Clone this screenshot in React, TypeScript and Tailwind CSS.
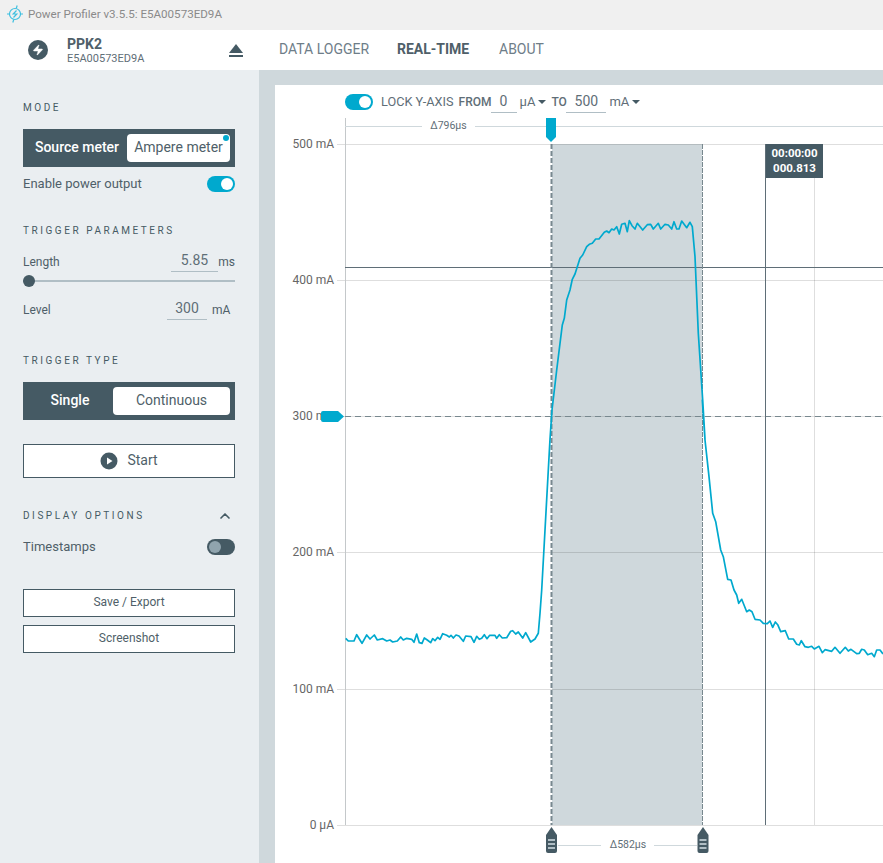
import { Zap, ChevronUp } from "lucide-react";

const CYAN = "#00a9ce";
const SLATE = "#455a64";

// trace samples, read off the zoomed crops: [x, y] relative to crop, 3x
const flat = [
  [17, 145], [25, 153], [42, 153], [50, 134], [58, 147], [66, 160], [80, 135], [90, 147], [103, 135], [112, 150],
  [128, 146], [140, 153], [150, 150], [158, 156], [172, 153], [182, 141], [190, 150], [200, 145], [215, 148], [222, 157],
  [230, 132], [238, 158], [246, 160], [253, 144], [262, 150], [272, 158], [278, 146], [285, 152], [293, 142], [300, 148],
  [308, 131], [320, 136], [328, 141], [333, 136], [340, 144], [348, 135], [357, 138], [370, 154], [377, 138], [393, 140],
  [402, 157], [410, 139], [418, 148], [425, 145], [433, 134], [441, 146], [449, 136], [465, 136], [470, 145], [478, 134],
  [487, 144], [500, 143], [512, 124], [518, 122], [527, 132], [535, 126], [548, 144], [557, 128], [572, 156], [585, 147],
  [595, 130], [600, 70], [605, 0],
];
const pulse = [
  [60, 718], [66, 630], [80, 510], [90, 430], [97, 375], [103, 355], [110, 300], [120, 270], [127, 238], [135, 222],
  [150, 175], [158, 165], [170, 140], [178, 133], [187, 130], [197, 117], [207, 117], [223, 97], [230, 93], [237, 98],
  [245, 87], [252, 90], [260, 80], [268, 102], [275, 73], [285, 70], [292, 95], [298, 62], [306, 77], [315, 87],
  [322, 70], [338, 90], [352, 74], [362, 73], [370, 87], [385, 70], [392, 87], [405, 73], [415, 75], [425, 87],
  [432, 65], [440, 87], [447, 87], [455, 63], [470, 83], [480, 67], [487, 80], [495, 170], [505, 400], [518, 600],
  [525, 718],
];
const decay = [
  [37, 0], [45, 120], [57, 230], [68, 340], [77, 365], [92, 450], [100, 470], [113, 538], [123, 540], [132, 570],
  [140, 585], [146, 610], [155, 598], [170, 635], [178, 630], [186, 635], [195, 658], [210, 660], [220, 670], [232, 671],
  [240, 663], [248, 682], [256, 666], [263, 674], [272, 695], [286, 692], [296, 717], [310, 717], [320, 733], [328, 735],
  [334, 722], [345, 740], [355, 742], [365, 739], [373, 747], [387, 739], [397, 758], [405, 749], [425, 754], [435, 742],
  [450, 760], [466, 742], [475, 753], [483, 748], [500, 761], [508, 760], [515, 748], [523, 750], [533, 764], [545, 760],
  [553, 770], [560, 750], [570, 750], [579, 762],
];

const toPage = (pts: number[][], ox: number, oy: number) =>
  pts.map(([x, y]) => `${(ox + x / 3).toFixed(1)},${(oy + y / 3).toFixed(1)}`).join(" ");

const trace = [toPage(flat, 340, 590), toPage(pulse, 530, 200), toPage(decay, 690, 400)].join(" ");

function SectionTitle({ children }: { children: string }) {
  return <div className="text-[10px] leading-3 tracking-[2.55px] uppercase text-[#455a64]">{children}</div>;
}

function Toggle({ on }: { on: boolean }) {
  return (
    <div
      className={`flex h-4 w-7 items-center rounded-full px-[2px] ${
        on ? "justify-end bg-[#00a9ce]" : "justify-start bg-[#455a64]"
      }`}
    >
      <div className={`h-3 w-3 rounded-full ${on ? "bg-white" : "bg-[#90a4ae]"}`} />
    </div>
  );
}

function NumberField({ value, className }: { value: string; className: string }) {
  return (
    <div className={`h-[21px] border-b border-[#b0bec5] text-center text-sm leading-[19px] text-[#5f6e77] ${className}`}>
      {value}
    </div>
  );
}

function Caret() {
  return <span className="ml-[3px] inline-block h-0 w-0 border-x-[4px] border-t-[4px] border-x-transparent border-t-[#455a64] align-middle" />;
}

function Sidebar() {
  return (
    <aside className="flex w-[259px] shrink-0 flex-col bg-[#eaeef1] pl-[23px] pr-[24px] pt-[32px] text-xs text-[#4f5f69]">
      <SectionTitle>Mode</SectionTitle>
      <div className="mt-[15px] flex h-[38px] items-center bg-[#455a64] pr-[5px] text-sm">
        <div className="w-[104px] pb-[3px] pl-1 text-center font-medium text-white">Source meter</div>
        <div className="relative flex h-7 flex-1 items-center justify-center rounded-sm bg-white pb-[3px] text-[#4f5f69]">
          Ampere meter
          <span className="absolute right-[1px] top-[1px] h-[6px] w-[6px] rounded-full bg-[#00a9ce]" />
        </div>
      </div>
      <div className="mt-[9px] flex h-4 items-center justify-between text-[13px]">
        <span>Enable power output</span>
        <Toggle on />
      </div>

      <div className="mt-[33px]">
        <SectionTitle>Trigger parameters</SectionTitle>
      </div>
      <div className="mt-[14px] flex items-center justify-between">
        <span>Length</span>
        <div className="flex items-center">
          <NumberField value="5.85" className="w-[47px]" />
          <span className="w-[17px] text-right">ms</span>
        </div>
      </div>
      <div className="relative mt-[3px] h-3">
        <div className="absolute left-0 right-0 top-[5px] h-[2px] bg-[#b0bec5]" />
        <div className="absolute left-0 top-0 h-3 w-3 rounded-full bg-[#455a64]" />
      </div>
      <div className="mt-[12px] flex items-center justify-between pr-[5px]">
        <span>Level</span>
        <div className="flex items-center">
          <NumberField value="300" className="w-10" />
          <span className="ml-[5px] w-[18px]">mA</span>
        </div>
      </div>

      <div className="mt-[35px]">
        <SectionTitle>Trigger type</SectionTitle>
      </div>
      <div className="mt-[15px] flex h-[38px] items-center bg-[#455a64] pr-[5px] text-sm">
        <div className="w-[90px] pb-[3px] pl-1 text-center font-medium text-white">Single</div>
        <div className="flex h-7 flex-1 items-center justify-center rounded-sm bg-white pb-[3px] text-[#4f5f69]">Continuous</div>
      </div>
      <button className="mt-[24px] flex h-[34px] items-center justify-center gap-[9px] border border-[#455a64] bg-white text-sm text-[#4f5f69]">
        <svg width="18" height="18" viewBox="0 0 18 18">
          <circle cx="9" cy="9" r="8.5" fill={SLATE} />
          <path d="M7 5.5 L12.5 9 L7 12.5 Z" fill="#fff" />
        </svg>
        <span className="pb-[2px]">Start</span>
      </button>

      <div className="mt-[32px] flex h-3 items-center justify-between">
        <SectionTitle>Display options</SectionTitle>
        <ChevronUp size={16} strokeWidth={2.5} color={SLATE} className="mr-[2px]" />
      </div>
      <div className="mt-[17px] flex h-4 items-center justify-between text-[13px]">
        <span>Timestamps</span>
        <Toggle on={false} />
      </div>
      <button className="mt-[34px] h-[28px] border border-[#455a64] bg-white pb-[2px] text-xs text-[#4f5f69]">Save / Export</button>
      <button className="mt-2 h-[28px] border border-[#455a64] bg-white pb-[2px] text-xs text-[#4f5f69]">Screenshot</button>
    </aside>
  );
}

function Marker({ x }: { x: number }) {
  return (
    <g transform={`translate(${x} 827)`}>
      <path d="M0 0 L5.5 8 V24 Q5.5 26 3.5 26 H-3.5 Q-5.5 26 -5.5 24 V8 Z" fill={SLATE} />
      <rect x="-3.5" y="12" width="7" height="2" fill="#b0bec5" />
      <rect x="-3.5" y="16" width="7" height="2" fill="#b0bec5" />
      <rect x="-3.5" y="20" width="7" height="2" fill="#b0bec5" />
    </g>
  );
}

function Chart() {
  const ticks = [
    { y: 144, label: "500 mA" },
    { y: 280, label: "400 mA" },
    { y: 416, label: "300 mA" },
    { y: 552, label: "200 mA" },
    { y: 689, label: "100 mA" },
    { y: 825, label: "0 µA" },
  ];
  return (
    <svg
      viewBox="275 116 608 747"
      width="608"
      height="747"
      className="block"
      style={{ fontFamily: "Roboto, sans-serif" }}
    >
      <rect x="552" y="144" width="150" height="681" fill="#cfd8dc" />

      {ticks.map((t) => (
        <g key={t.y}>
          <line x1="337" x2="883" y1={t.y + 0.5} y2={t.y + 0.5} stroke="#000" strokeOpacity="0.13" />
          <text x="334" y={t.y + 4} textAnchor="end" fontSize="12" fill="#666">
            {t.label}
          </text>
        </g>
      ))}
      <line x1="814.5" x2="814.5" y1="144" y2="825" stroke="#000" strokeOpacity="0.13" />
      <line x1="345.5" x2="345.5" y1="118" y2="825" stroke="#c4c8ca" />

      <line x1="345" x2="422" y1="126.5" y2="126.5" stroke="#cfd8dc" />
      <line x1="475" x2="883" y1="126.5" y2="126.5" stroke="#cfd8dc" />
      <text x="448.5" y="129" textAnchor="middle" fontSize="10.5" fill="#5f6e77">
        Δ796µs
      </text>

      <line x1="345" x2="883" y1="267.5" y2="267.5" stroke="#5f6e77" />
      <line x1="345" x2="883" y1="416.5" y2="416.5" stroke="#78888f" strokeDasharray="6 4" />
      <line x1="765.5" x2="765.5" y1="144" y2="825" stroke="#5f6e77" />
      <line x1="551.5" x2="551.5" y1="144" y2="825" stroke="#78888f" strokeWidth="2" strokeDasharray="5 2" />
      <line x1="702.5" x2="702.5" y1="144" y2="825" stroke="#78888f" strokeDasharray="5 1" />

      <polyline points={trace} fill="none" stroke={CYAN} strokeWidth="1.7" strokeLinejoin="round" />

      <rect x="766" y="144" width="57" height="34" fill={SLATE} />
      <text x="794.5" y="157" textAnchor="middle" fontSize="11.5" fontWeight="700" fill="#fff">
        00:00:00
      </text>
      <text x="794.5" y="172" textAnchor="middle" fontSize="11.5" fontWeight="700" fill="#fff">
        000.813
      </text>

      <path d="M546 118 H556 V137 L551 142 L546 137 Z" fill={CYAN} />
      <path d="M321 413 Q321 411 323 411 H338 L344 416.5 L338 422 H323 Q321 422 321 420 Z" fill={CYAN} />

      <line x1="558" x2="601" y1="845.5" y2="845.5" stroke="#cfd8dc" />
      <line x1="654" x2="697" y1="845.5" y2="845.5" stroke="#cfd8dc" />
      <text x="628" y="848" textAnchor="middle" fontSize="10.5" fill="#5f6e77">
        Δ582µs
      </text>
      <Marker x={551.5} />
      <Marker x={703} />
    </svg>
  );
}

export default function App() {
  return (
    <div className="flex h-[863px] w-[883px] flex-col overflow-hidden font-['Roboto',sans-serif]">
      <div className="flex h-[30px] shrink-0 items-center gap-[5px] bg-[#f0f0f0] pl-[7px] text-[11.6px] text-[#8a8a8a]">
        <svg width="16" height="18" viewBox="0 0 16 18" fill="none" stroke="#3fc0e0" strokeWidth="1.2" className="mb-[2px]">
          <circle cx="8" cy="9" r="5.5" />
          <path d="M0 9 H2.5 M13.5 9 H16 M10.2 0.5 L9.2 3.5 M5.8 17.5 L6.8 14.5" />
          <path d="M9.5 5.5 L6.2 9 H9.8 L6.5 12.5" />
        </svg>
        <span>Power Profiler v3.5.5: E5A00573ED9A</span>
      </div>

      <header className="flex h-10 shrink-0 items-center bg-white">
        <div className="flex w-[259px] shrink-0 items-center pl-[28px] pr-4">
          <div className="flex h-5 w-5 items-center justify-center rounded-full bg-[#455a64]">
            <Zap size={12} fill="#fff" stroke="#fff" strokeWidth={1} />
          </div>
          <div className="ml-[19px] flex-1 pt-[2px]">
            <div className="text-sm font-bold leading-[15px] text-[#4f5f69]">PPK2</div>
            <div className="text-[11px] leading-[13px] text-[#5f6e77]">E5A00573ED9A</div>
          </div>
          <svg width="14" height="14" viewBox="0 0 14 14" fill={SLATE}>
            <path d="M7 1 L14 10 H0 Z" />
            <rect x="0" y="12" width="14" height="2" />
          </svg>
        </div>
        <nav className="ml-5 flex pb-[2px] text-sm text-[#6e7d88]">
          <span className="w-[118px]">DATA LOGGER</span>
          <span className="w-[102px] font-bold text-[#4f5f69]">REAL-TIME</span>
          <span>ABOUT</span>
        </nav>
      </header>

      <div className="flex min-h-0 flex-1">
        <Sidebar />
        <main className="flex-1 bg-[#cfd8dc] pl-4 pt-[15px]">
          <div className="h-full bg-white">
            <div className="flex h-[31px] items-center pl-[70px] pt-[3px] text-xs text-[#5f6e77]">
              <Toggle on />
              <span className="ml-2 text-[12.7px]">LOCK Y-AXIS</span>
              <span className="ml-[5px] w-[32px] font-medium">FROM</span>
              <NumberField value="0" className="w-[26px]" />
              <span className="ml-[3px] text-[13px]">µA</span>
              <Caret />
              <span className="ml-[5px] w-[15px] font-medium">TO</span>
              <NumberField value="500" className="w-10" />
              <span className="ml-[3px] text-[13px]">mA</span>
              <Caret />
            </div>
            <Chart />
          </div>
        </main>
      </div>
    </div>
  );
}
